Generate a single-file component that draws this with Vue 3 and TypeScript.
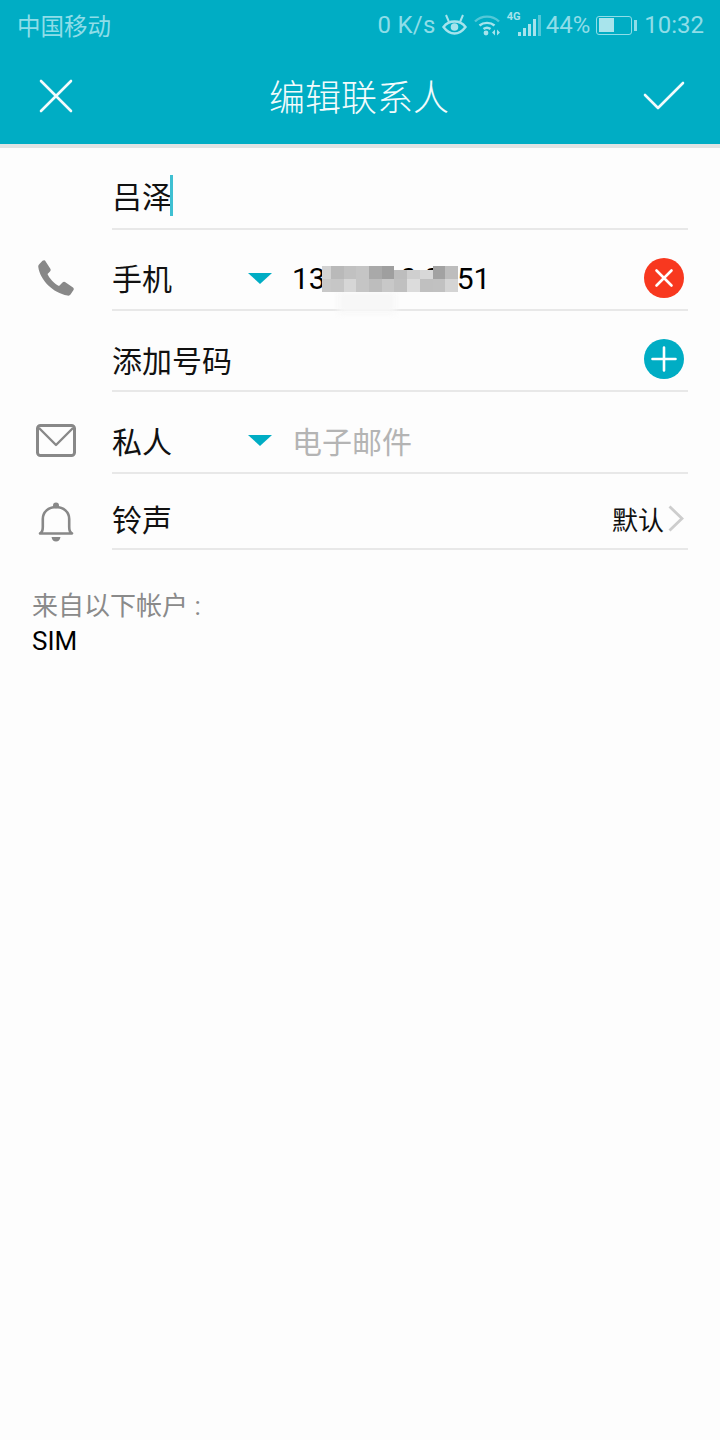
<script setup lang="ts">
// colours of the pixelated part of the phone number, row by row
const mosaicRows = [
  ['#d2d2d2', '#b9b9b9', '#c1c1c1', '#c5c5c5', '#a9a9a9', '#9f9f9f', '#bdbdbd', '#cfcfcf', '#d8d8d8', '#a2a2a2', '#bdbdbd'],
  ['#c8c8c8', '#c6c6c6', '#d6d6d6', '#c5c5c5', '#bdbdbd', '#c8c8c8', '#c0c0c0', '#dcdcdc', '#c0c0c0', '#c1c1c1', '#d4d4d4'],
]
const notched = [6, 7, 8]
const mosaic = mosaicRows.flatMap((row, r) =>
  row.map((color, c) => ({
    color,
    inset: r === 0 && notched.includes(c) ? 4 : 0,
  })),
)
</script>

<template>
  <div class="screen">
    <header class="appbar">
      <div class="status">
        <span class="carrier">中国移动</span>
        <div class="status-right">
          <span class="speed">0 K/s</span>
          <svg class="eye" width="25" height="22" viewBox="0 0 25 22" fill="none" stroke="#a6e3ec" stroke-width="2.4">
            <path d="M1.500 13c3-4 6.500-5.500 11-5.500s8 1.500 11 5.500c-3 4-6.500 6.500-11 6.500S4.500 17 1.500 13z" />
            <circle cx="12.500" cy="13" r="3.800" fill="#a6e3ec" stroke="none" />
            <path d="M4 1l3 7M21 1l-3 7" stroke-width="2" />
          </svg>
          <svg class="wifi" width="27" height="22" viewBox="0 0 27 22" fill="none" stroke="#a6e3ec" stroke-width="2.4">
            <path d="M1 7.500c6.500-6.500 17.500-6.500 24 0" opacity=".5" />
            <path d="M5.500 11.500c4-3.500 11-3.500 15 0" />
            <path d="M9.500 15c2-1.500 5-1.500 7 0" />
            <circle cx="12" cy="19" r="2.400" fill="#a6e3ec" stroke="none" />
            <path d="M21 15.500v6l-3-3zM23 15.500l3 3-3 3z" fill="#a6e3ec" stroke="none" />
          </svg>
          <div class="signal">
            <span class="net">4G</span>
            <i style="height: 4px" />
            <i style="height: 8px" />
            <i style="height: 12px" />
            <i style="height: 17px" />
            <i class="dim" style="height: 21px" />
          </div>
          <span class="percent">44%</span>
          <div class="battery">
            <div class="battery-body"><div class="battery-fill" /></div>
            <div class="battery-tip" />
          </div>
          <span class="time">10:32</span>
        </div>
      </div>
      <div class="toolbar">
        <svg width="36" height="36" viewBox="0 0 36 36" fill="none" stroke="#f2fbfc" stroke-width="2.6" stroke-linecap="round">
          <path d="M3 3l30 30M33 3L3 33" />
        </svg>
        <span class="title">编辑联系人</span>
        <svg width="42" height="30" viewBox="0 0 42 30" fill="none" stroke="#f2fbfc" stroke-width="2.6" stroke-linecap="round" stroke-linejoin="round">
          <path d="M2 14l13 13L40 2" />
        </svg>
      </div>
    </header>
    <div class="shadow" />

    <section class="form">
      <div class="row name-row">
        <div class="slot" />
        <div class="cell">
          <span class="name">吕泽</span><span class="caret" />
        </div>
      </div>

      <div class="row phone-row">
        <div class="slot">
          <svg width="36" height="36" viewBox="0 0 36 36" fill="#888888">
            <path d="M7 .5l5.500 8.500q.5 1.500-.5 2.500L9.500 14c2 4.500 6.500 9.500 11.500 12l3.500-3.500q1-1 2.500-.5l8 5.500q1.300 1 .5 2.500l-3 4.500q-1 1.500-3 1C15 33 2 20 .3 7 0 5.500 1 4.500 1 4.500L4.500.8Q6-.3 7 .5z" />
          </svg>
        </div>
        <div class="cell">
          <span class="label">手机</span>
          <span class="arrow" />
          <div class="number">
            <span>13</span><span class="hidden-digits">00</span><span>51</span>
            <div class="smudge" />
            <div class="mosaic">
              <i
                v-for="(b, i) in mosaic"
                :key="i"
                :style="{ background: b.color, marginTop: b.inset + 'px' }"
              />
            </div>
          </div>
          <svg class="action" width="40" height="40" viewBox="0 0 40 40">
            <circle cx="20" cy="20" r="20" fill="#f8381f" />
            <path d="M12.500 12.500l15 15M27.500 12.500l-15 15" stroke="#fff" stroke-width="2.6" stroke-linecap="round" />
          </svg>
        </div>
      </div>

      <div class="row add-row">
        <div class="slot" />
        <div class="cell">
          <span class="label">添加号码</span>
          <svg class="action" width="40" height="40" viewBox="0 0 40 40">
            <circle cx="20" cy="20" r="20" fill="#00adc4" />
            <path d="M20 8.500v23M8.500 20h23" stroke="#fff" stroke-width="2.6" stroke-linecap="round" />
          </svg>
        </div>
      </div>

      <div class="row mail-row">
        <div class="slot">
          <svg width="40" height="33" viewBox="0 0 40 33" fill="none" stroke="#888888" stroke-width="3" stroke-linejoin="round">
            <rect x="1.500" y="1.500" width="37" height="30" rx="3" />
            <path d="M3 4l17 17L37 4" stroke-width="2.4" />
          </svg>
        </div>
        <div class="cell">
          <span class="label">私人</span>
          <span class="arrow" />
          <span class="placeholder">电子邮件</span>
        </div>
      </div>

      <div class="row ring-row">
        <div class="slot">
          <svg width="36" height="40" viewBox="0 0 36 40" fill="none" stroke="#888888" stroke-width="2.6" stroke-linejoin="round" stroke-linecap="round">
            <path d="M2 31.500c2-1 2.800-3 2.800-6.500v-8c0-7 5.700-12 13.200-12s13.200 5 13.200 12v8c0 3.500.8 5.500 2.800 6.500z" />
            <circle cx="18" cy="3.500" r="3" fill="#888888" stroke="none" />
            <path d="M13.500 35h9c-.5 3-2.200 4.500-4.500 4.500s-4-1.500-4.500-4.500z" fill="#888888" stroke="none" />
          </svg>
        </div>
        <div class="cell">
          <span class="label">铃声</span>
          <div class="ring-value">
            <span>默认</span>
            <svg width="16" height="27" viewBox="0 0 16 27" fill="none" stroke="#cdcdcd" stroke-width="2.8">
              <path d="M1.500 1.500L14 13.500 1.500 25.500" />
            </svg>
          </div>
        </div>
      </div>

      <div class="account">
        <p class="account-label">来自以下帐户 :</p>
        <p class="account-name">SIM</p>
      </div>
    </section>
  </div>
</template>

<style>
html,
body {
  margin: 0;
  background: #fdfdfd;
}
</style>

<style scoped>
.screen {
  width: 720px;
  height: 1440px;
  overflow: hidden;
  background: #fdfdfd;
  font-family: Roboto, "Noto Sans CJK SC", sans-serif;
  color: #111;
}

.appbar {
  height: 144px;
  background: #00adc4;
}

.shadow {
  height: 4px;
  background: #e0e4e4;
}

.status {
  height: 48px;
  padding: 0 16px 0 17px;
  display: flex;
  align-items: center;
  justify-content: space-between;
  color: #8fdde8;
  font-size: 24px;
  box-sizing: border-box;
}

.carrier {
  font-size: 23.5px;
  padding-top: 2px;
}

.status-right {
  display: flex;
  align-items: center;
  padding-top: 2px;
}

.speed {
  letter-spacing: 0.3px;
}

.eye {
  margin-left: 6px;
}

.wifi {
  margin-left: 7px;
}

.signal {
  margin-left: 17px;
  display: flex;
  align-items: flex-end;
  gap: 2px;
  height: 22px;
  position: relative;
}

.signal i {
  display: block;
  width: 3px;
  background: #a6e3ec;
}

.signal i.dim {
  opacity: 0.5;
}

.net {
  position: absolute;
  left: -11px;
  top: -4px;
  font-size: 11px;
  font-weight: 700;
  color: #a6e3ec;
}

.percent {
  margin-left: 5px;
}

.battery {
  margin-left: 6px;
  display: flex;
  align-items: center;
  gap: 2px;
}

.battery-body {
  width: 36px;
  height: 19px;
  border: 1.5px solid #8fdde8;
  border-radius: 3px;
  padding: 1.5px;
  box-sizing: border-box;
}

.battery-fill {
  width: 15px;
  height: 100%;
  background: #a8e4ec;
}

.battery-tip {
  width: 3px;
  height: 11px;
  background: #8fdde8;
}

.time {
  margin-left: 7px;
}

.toolbar {
  height: 96px;
  padding: 0 35px 0 38px;
  display: flex;
  align-items: center;
  justify-content: space-between;
}

.title {
  font-size: 36px;
  color: #f2fbfc;
  font-weight: 300;
  padding: 0 0 2px 1px;
}

.row {
  display: flex;
  padding-right: 32px;
}

.slot {
  width: 112px;
  flex-shrink: 0;
  display: flex;
  justify-content: center;
  align-items: center;
  box-sizing: border-box;
}

.cell {
  flex: 1;
  display: flex;
  align-items: center;
  border-bottom: 2px solid #e8e8e8;
  box-sizing: border-box;
  font-size: 30px;
}

.name-row .cell {
  height: 82px;
  padding-top: 14px;
}

.phone-row .slot {
  padding-top: 15px;
}

.phone-row .cell {
  height: 81px;
  padding-top: 17px;
}

.phone-row .label {
  padding-bottom: 3px;
}

.add-row .cell {
  height: 81px;
  padding-top: 17px;
}

.mail-row .slot {
  padding-top: 15px;
}

.mail-row .cell {
  height: 82px;
  padding-top: 16px;
}

.ring-row .slot {
  padding-top: 20px;
}

.ring-row .cell {
  height: 76px;
  padding-top: 14px;
}

.caret {
  display: inline-block;
  width: 3px;
  height: 41px;
  margin-left: -2px;
  background: #3fc0d2;
}

.label {
  width: 136px;
  flex-shrink: 0;
}

.add-row .label {
  width: auto;
  flex: 1;
}

.arrow {
  width: 0;
  height: 0;
  margin-top: 1px;
  border-left: 12px solid transparent;
  border-right: 12px solid transparent;
  border-top: 11px solid #00adc4;
  margin-right: 20px;
}

.number {
  flex: 1;
  position: relative;
  font-family: Roboto, sans-serif;
  color: #000;
}

.hidden-digits {
  display: inline-block;
  width: 131px;
  padding-right: 9px;
  box-sizing: border-box;
  text-align: right;
  letter-spacing: 7px;
}

.mosaic {
  position: absolute;
  left: 30px;
  top: 5px;
  display: grid;
  grid-template-columns: 9px repeat(10, 12.7px);
  grid-auto-rows: 13px;
  filter: blur(0.6px);
}

.mosaic i {
  display: block;
}

.smudge {
  position: absolute;
  left: 46px;
  top: 30px;
  width: 58px;
  height: 22px;
  background: #f7f7f7;
  filter: blur(3px);
}

.action {
  flex-shrink: 0;
  margin-right: 4px;
}

.placeholder {
  color: #b4b4b4;
}

.ring-value {
  margin-left: auto;
  margin-right: 4px;
  display: flex;
  align-items: center;
  gap: 4px;
  font-size: 26px;
}

.account {
  padding: 39px 32px 0;
}

.account p {
  margin: 0;
}

.account-label {
  font-size: 26px;
  color: #8a8a8a;
  line-height: 34px;
}

.account-name {
  font-size: 26px;
  color: #000;
  line-height: 36px;
}
</style>
